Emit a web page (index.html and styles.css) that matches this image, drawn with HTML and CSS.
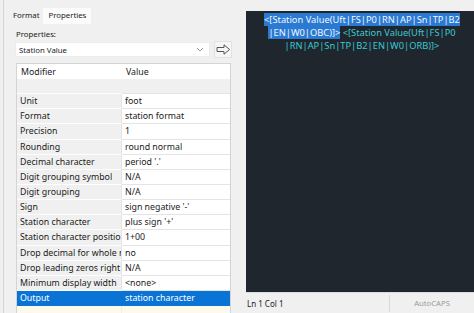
FILE: index.html
```html
<!DOCTYPE html>
<html lang="en">
<head>
  <meta charset="UTF-8" />
  <title>Label Style Composer</title>
  <link rel="stylesheet" href="styles.css">
</head>
<body>
  <div class="app">
    <div class="left-panel">
      <div class="tabs">
        <span class="tab">Format</span>
        <span class="tab active">Properties</span>
      </div>
      <div class="pane">
        <div class="field-label">Properties:</div>
        <div class="picker">
          <div class="select">
            <span>Station Value</span>
            <svg class="chevron" width="8" height="5" viewBox="0 0 8 5"><path d="M1 1 L4 4 L7 1" fill="none" stroke="#9a9a9a" stroke-width="1"/></svg>
          </div>
          <button class="insert-btn">
            <svg width="15" height="11" viewBox="0 0 15 11"><path d="M1 3.5 H8 V0.8 L13.6 5.5 L8 10.2 V7.5 H1 Z" fill="none" stroke="#555" stroke-width="1" stroke-linejoin="round"/></svg>
          </button>
        </div>
        <div class="grid">
          <div class="row head"><div class="cell">Modifier</div><div class="cell">Value</div></div>
          <div class="row blank"><div class="cell"></div><div class="cell"></div></div>
          <div class="row"><div class="cell">Unit</div><div class="cell">foot</div></div>
          <div class="row"><div class="cell">Format</div><div class="cell">station format</div></div>
          <div class="row"><div class="cell">Precision</div><div class="cell">1</div></div>
          <div class="row"><div class="cell">Rounding</div><div class="cell">round normal</div></div>
          <div class="row"><div class="cell">Decimal character</div><div class="cell">period '.'</div></div>
          <div class="row"><div class="cell">Digit grouping symbol</div><div class="cell">N/A</div></div>
          <div class="row"><div class="cell">Digit grouping</div><div class="cell">N/A</div></div>
          <div class="row"><div class="cell">Sign</div><div class="cell">sign negative '-'</div></div>
          <div class="row"><div class="cell">Station character</div><div class="cell">plus sign '+'</div></div>
          <div class="row"><div class="cell">Station character position</div><div class="cell">1+00</div></div>
          <div class="row"><div class="cell">Drop decimal for whole numbers</div><div class="cell">no</div></div>
          <div class="row"><div class="cell">Drop leading zeros right</div><div class="cell">N/A</div></div>
          <div class="row"><div class="cell">Minimum display width</div><div class="cell">&lt;none&gt;</div></div>
          <div class="row selected"><div class="cell">Output</div><div class="cell">station character</div></div>
          <div class="row new"><div class="cell"></div><div class="cell"></div></div>
        </div>
      </div>
    </div>
    <div class="right-panel">
      <div class="editor-top"></div>
      <div class="editor">
        <p class="code"><span class="sel">&lt;[Station Value(Uft|FS|P0|RN|AP|Sn|TP|B2<br>|EN|W0|OBC)]&gt;</span> &lt;[Station Value(Uft|FS|P0<br>|RN|AP|Sn|TP|B2|EN|W0|ORB)]&gt;</p>
      </div>
      <div class="status">
        <div class="pos">Ln 1 Col 1</div>
        <div class="caps">AutoCAPS</div>
      </div>
    </div>
  </div>
</body>
</html>
```

FILE: styles.css
```css
* { margin: 0; padding: 0; box-sizing: border-box; }
body {
  background-color: #f0f0f0;
  font-family: "Noto Sans", "Open Sans", sans-serif;
  font-size: 8.8px;
  color: #1a1a1a;
  overflow: hidden;
}

.app {
  display: flex;
  width: 474px;
  height: 313px;
}

/* 左侧属性面板 */
.left-panel {
  width: 246px;
  flex: none;
  background: linear-gradient(to right, #f0f0f0 3px, #d4d4d4 3px, #d4d4d4 4px, #f0f0f0 4px);
}

.tabs {
  display: flex;
  align-items: flex-end;
  height: 24px;
  padding-left: 9px;
  font-size: 7.8px;
}
.tab {
  padding: 0 4px 3px;
  line-height: 11px;
}
.tab.active {
  background: #fbfbfb;
  padding: 2px 5px 3px;
}

.pane {
  padding: 5px 14px 0 16px;
}
.field-label { line-height: 11px; font-size: 7.8px; }

.picker {
  display: flex;
  align-items: center;
  gap: 4px;
  margin-top: 1px;
  margin-left: -1px;
}
.select {
  flex: 1;
  height: 15px;
  background: #fff;
  display: flex;
  align-items: center;
  justify-content: space-between;
  padding: 0 5px 0 3px;
  border: 1px solid #ececec;
  font-size: 7.8px;
}
.insert-btn {
  width: 18px;
  height: 17px;
  border: 1px solid #e2e2e2;
  background: #f6f6f6;
  display: flex;
  align-items: center;
  justify-content: center;
}

.grid {
  margin-top: 5px;
  width: 215px;
  border: 1px solid #d4d4d4;
  background: #fff;
}
.row {
  display: grid;
  grid-template-columns: 105px 1fr;
  height: 15.15px;
  line-height: 14px;
}
.cell {
  padding-left: 3px;
  white-space: nowrap;
  overflow: hidden;
  border-bottom: 1px solid #e4e4e4;
}
.row .cell:first-child {
  background: #f0f0f0;
  border-right: 1px solid #e4e4e4;
  border-bottom-color: #fdfdfd;
}
.row.head { height: 15px; }
.row.head .cell { background: #fff; border: none; padding-left: 4px; padding-top: 1px; }
.row.blank .cell, .row.blank .cell:first-child { background: #f0f0f0; border-right: none; height: 15px; }
.row.selected .cell, .row.selected .cell:first-child {
  background: #0a74d6;
  color: #fff;
  border-color: #0a74d6;
}
.row.new .cell, .row.new .cell:first-child { background: #fcfaea; border-right-color: #eee; }

/* 右侧编辑器 */
.right-panel {
  flex: 1;
  display: flex;
  flex-direction: column;
}
.editor-top { height: 11px; }
.editor {
  flex: 1;
  background: #1f262e;
  padding: 2px 0 0 4px;
}
.code {
  font-family: "Noto Sans", "Open Sans", sans-serif;
  font-size: 9.3px;
  line-height: 13px;
  color: #3cc8d2;
  text-align: center;
  white-space: nowrap;
}
.sel {
  background: #2a79d3;
  color: #eef8ff;
}

.status {
  height: 21px;
  display: flex;
  align-items: center;
  border-top: 1px solid #dcdcdc;
  font-size: 8px;
}
.pos { width: 144px; padding-left: 1px; border-right: 1px solid #d8d8d8; line-height: 17px; }
.caps { flex: 1; text-align: center; color: #9a9a9a; font-size: 7.7px; }
```
